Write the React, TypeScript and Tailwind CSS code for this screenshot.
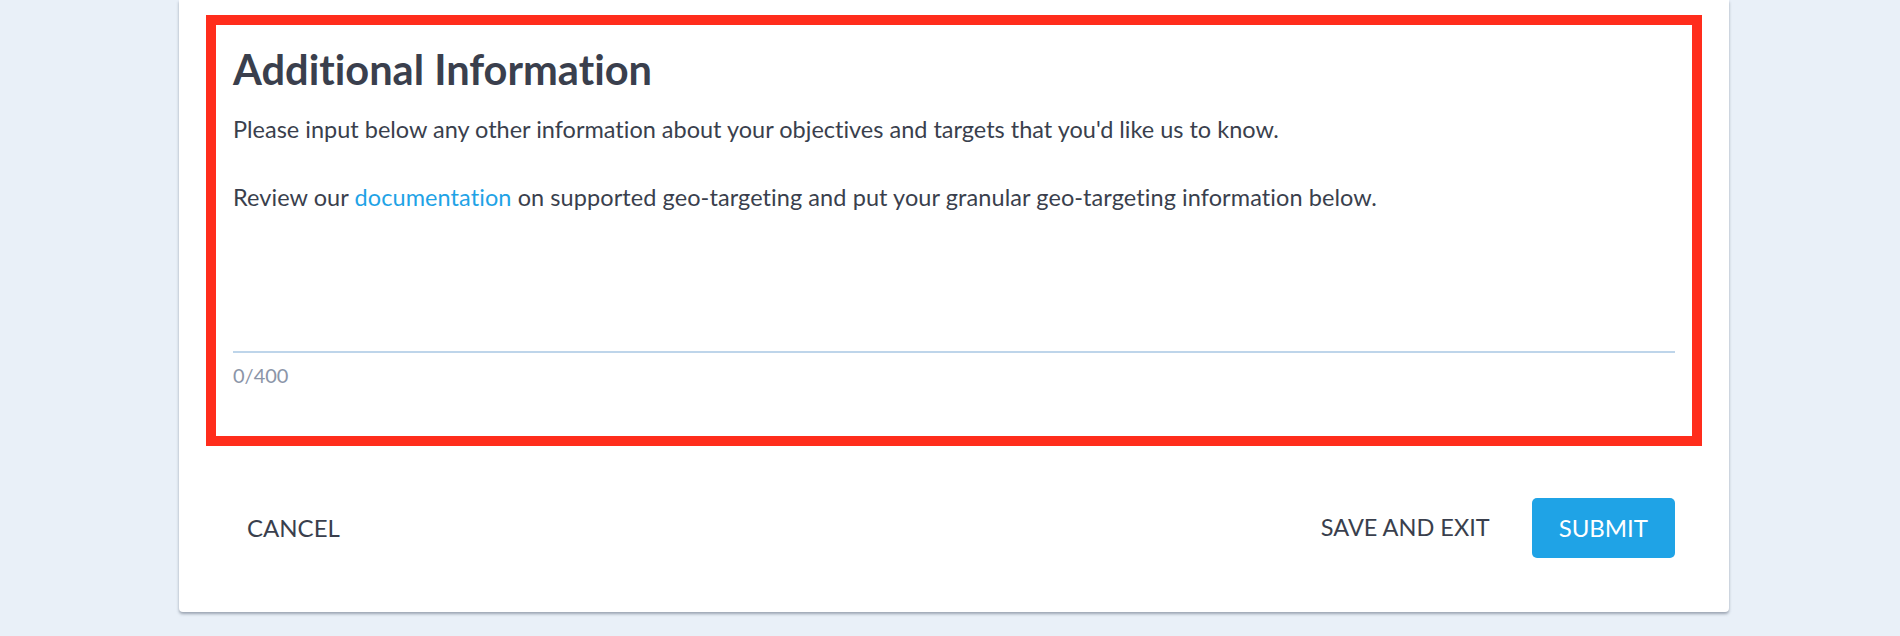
const AdditionalInfo = () => {
  return (
    <div className="w-[1900px] h-[636px] overflow-hidden bg-[#e9f0f8] font-['Lato',sans-serif] text-[#3a3f4d] [font-variant-ligatures:none]">
      <div className="ml-[179px] w-[1550px] bg-white rounded-b-[4px] shadow-[0_2px_3px_rgba(60,70,90,0.45)] pt-[15px] px-[27px] pb-[54px]">
        <div className="border-[10px] border-[#ff2d1c] pt-[19px] px-[17px] pb-[49px]">
          <h1 className="text-[41.6px] leading-[50px] font-bold">Additional Information</h1>
          <p className="mt-[19px] text-[23.5px] leading-[32px]">
            Please input below any other information about your objectives and targets that you'd like us to know.
          </p>
          <p className="mt-[36px] text-[23.5px] leading-[32px] tracking-[0.08px]">
            Review our <a className="text-[#1fa3e6]">documentation</a> on supported geo-targeting and put your granular geo-targeting information below.
          </p>
          <div className="h-[140px] border-b-2 border-[#bed5ea]" />
          <div className="mt-[10px] text-[20px] leading-[24px] text-[#8b95a8]">0/400</div>
        </div>

        <div className="mt-[52px] px-[27px] flex items-center justify-between">
          <button className="h-[60px] px-[14px] text-[24px] uppercase">Cancel</button>
          <div className="flex items-center">
            <button className="h-[60px] px-[14px] mr-[28px] text-[23.5px] uppercase">Save and Exit</button>
            <button className="h-[60px] px-[27px] rounded-[5px] bg-[#1fa3e6] text-white text-[24px] uppercase">
              Submit
            </button>
          </div>
        </div>
      </div>
    </div>
  );
};

export default AdditionalInfo;
